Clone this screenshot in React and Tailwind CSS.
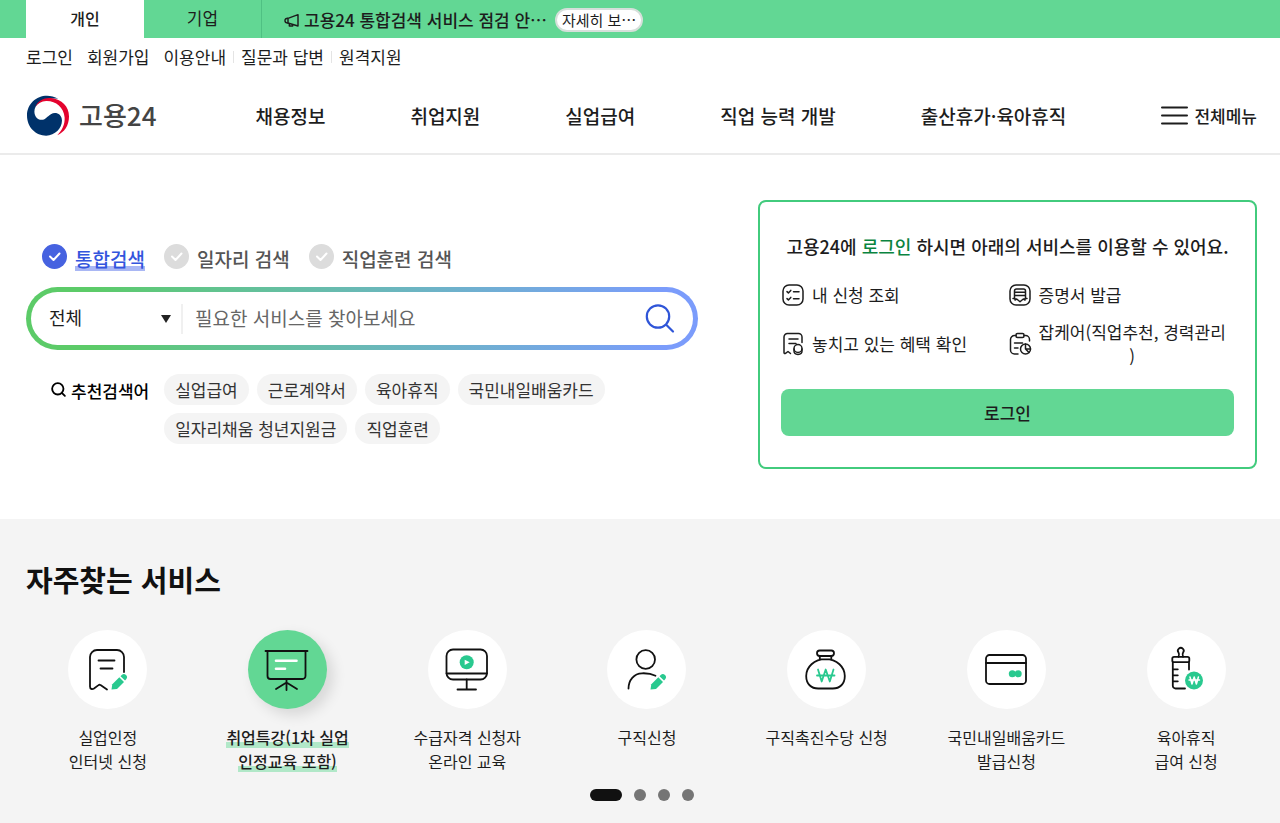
import { useState } from "react";
import { Search } from "lucide-react";

const MENUS = [
  "채용정보",
  "취업지원",
  "실업급여",
  "직업 능력 개발",
  "출산휴가·육아휴직",
];

const SEARCH_TYPES = ["통합검색", "일자리 검색", "직업훈련 검색"];

const KEYWORDS = [
  "실업급여",
  "근로계약서",
  "육아휴직",
  "국민내일배움카드",
  "일자리채움 청년지원금",
  "직업훈련",
];

const Logo = () => (
  <svg viewBox="11 11 125 122" className="h-[41px] w-[42px]" aria-hidden="true">
    <path
      fill="#00326a"
      d="M104 22C60 -2 11 26 11 72C11 108 38 132 68 132C95 130 116 110 115 86C114 68 97 60 82 68C70 75 66 85 54 85C42 85 33 74 33 60C34 40 54 18 104 22Z"
    />
    <path
      fill="#e4032e"
      d="M36 46C44 26 64 18 82 20C115 24 136 45 136 75C136 102 122 122 101 131C116 116 124 98 123 78C121 48 96 28 68 29C54 30 43 37 36 46Z"
    />
  </svg>
);

const MegaphoneIcon = () => (
  <svg
    viewBox="0 0 24 24"
    className="size-4 shrink-0"
    fill="none"
    stroke="currentColor"
    strokeWidth="2.2"
    strokeLinejoin="round"
    aria-hidden="true"
  >
    <path d="M6 9.500 21 4v17L6 16.500z" />
    <path d="M6 9.500C2.500 9.500 1.500 11 1.500 13s1 3.500 4.500 3.500M8 17v4h5v-2.500" />
  </svg>
);

/* 로그인 카드 아이콘 */
const CardIcon = ({ children }) => (
  <svg
    viewBox="0 0 24 24"
    className="size-6 shrink-0"
    fill="none"
    stroke="#1d1d1d"
    strokeWidth="1.5"
    strokeLinecap="round"
    strokeLinejoin="round"
    aria-hidden="true"
  >
    {children}
  </svg>
);

const CARD_ITEMS = [
  {
    key: "apply",
    label: "내 신청 조회",
    icon: (
      <CardIcon>
        <rect x="2" y="2" width="20" height="20" rx="6" />
        <path d="m6 8.600 1.400 1.300L9.800 7.400M6 15.600l1.400 1.300 2.400-2.500M12.500 8.800h5.500M12.500 15.800h5.500" />
      </CardIcon>
    ),
  },
  {
    key: "cert",
    label: "증명서 발급",
    icon: (
      <CardIcon>
        <rect x="2" y="2" width="20" height="20" rx="6" />
        <path d="M5 15.500h2V17l1.700-1 3.300 2.800 3.300-2.800 1.700 1v-1.500h2M6.500 15.500V8a2 2 0 0 1 2-2h7a2 2 0 0 1 2 2v7.500M6.500 9.300h11M6.500 12.500h11" />
      </CardIcon>
    ),
  },
  {
    key: "benefit",
    label: "놓치고 있는 혜택 확인",
    icon: (
      <CardIcon>
        <path d="M21 10.500V5a3.500 3.500 0 0 0-3.500-3.500H6.500A3.500 3.500 0 0 0 3 5v15.500c0 1 .8 1.300 1.500.8L7 19.500l2.500 2M8 7h9M8 11.500h7" />
        <circle cx="17" cy="16.500" r="4" />
        <path d="M13 17v2c0 4.500 8 4.500 8 0v-2" />
      </CardIcon>
    ),
  },
  {
    key: "jobcare",
    label: (
      <>
        잡케어(직업추천, 경력관리
        <br />)
      </>
    ),
    icon: (
      <CardIcon>
        <path d="M8 3.500H6.500A4 4 0 0 0 2.500 7.500V18a4 4 0 0 0 4 4H10M16 3.500h1.500a4 4 0 0 1 4 4V9M6.500 11h8M6.500 16H10" />
        <rect x="8" y="1.500" width="8" height="4" rx="1.500" />
        <circle cx="17.500" cy="17" r="5" />
        <path d="M17.500 12v5l3.500 3.500M17.500 17h5" />
      </CardIcon>
    ),
  },
];

/* 자주찾는 서비스 아이콘 */
const ServiceIcon = ({ children }) => (
  <svg
    viewBox="0 0 79 79"
    className="size-[79px]"
    fill="none"
    stroke="#111"
    strokeWidth="1.8"
    strokeLinecap="round"
    strokeLinejoin="round"
    aria-hidden="true"
  >
    {children}
  </svg>
);

const Pencil = () => (
  <g fill="#29c98f" stroke="none">
    <path d="M43.500 59.500 44.300 54.300 51.300 47.300 56 52 49 59Z" />
    <path d="m52.500 46.300 1.200-1.200a2.900 2.900 0 0 1 4.300 4.300L57 50.600Z" />
  </g>
);

const SERVICES = [
  {
    lines: ["실업인정", "인터넷 신청"],
    icon: (
      <ServiceIcon>
        <path d="M56 42V27a7 7 0 0 0-7-7H29a7 7 0 0 0-7 7v29.500c0 2.500 2 3.300 4 2l4.500-3.400q1-.8 2 0l6.500 4.400M30.500 30.500h16M32.500 38.500h12" />
        <Pencil />
      </ServiceIcon>
    ),
  },
  {
    lines: ["취업특강(1차 실업", "인정교육 포함)"],
    active: true,
    icon: (
      <ServiceIcon>
        <path d="M17.500 21h42M19.500 21v25a3 3 0 0 0 3 3h32a3 3 0 0 0 3-3V21M38.500 49v11M38.500 52.500 28 59M38.500 52.500 49 59" />
        <path stroke="#fff" strokeWidth="2.600" d="M28 30.700h20.500M28 38.700h9" />
      </ServiceIcon>
    ),
  },
  {
    lines: ["수급자격 신청자", "온라인 교육"],
    icon: (
      <ServiceIcon>
        <rect x="18.500" y="19.500" width="40.500" height="30" rx="6.500" />
        <path d="M18.500 43.500H59M38.700 49.500v10M29.500 59.500h18.500" />
        <circle cx="38.700" cy="32.300" r="7" fill="#29c98f" stroke="none" />
        <path d="m36.700 29.700 5 2.600-5 2.600z" fill="#fff" stroke="none" />
      </ServiceIcon>
    ),
  },
  {
    lines: ["구직신청"],
    icon: (
      <ServiceIcon>
        <circle cx="38.700" cy="29.500" r="9.300" />
        <path d="M21.500 58.500C21.500 50 27 43.500 35 43.300c5-.2 9 .2 13.500 2.400" />
        <Pencil />
      </ServiceIcon>
    ),
  },
  {
    lines: ["구직촉진수당 신청"],
    icon: (
      <ServiceIcon>
        <rect x="30" y="20.500" width="17" height="5.500" rx="2.700" />
        <path d="M32.800 26v3.500M44.300 26v3.500M38.500 29.200C27 29.200 19.200 37 19.200 46c0 8 5 12.500 12 12.500h14.600c7 0 12-4.500 12-12.500 0-9-7.800-16.800-19.300-16.800Z" />
        <path stroke="#29c98f" d="m31 39.500 3.700 12 4-12 4.100 12 3.700-12M30 45.500h17.500" />
      </ServiceIcon>
    ),
  },
  {
    lines: ["국민내일배움카드", "발급신청"],
    icon: (
      <ServiceIcon>
        <rect x="19" y="25" width="40" height="29" rx="3.500" />
        <path d="M19 33h40" />
        <g fill="#29c98f" stroke="none">
          <circle cx="45.300" cy="43.800" r="3.500" />
          <circle cx="51.200" cy="43.800" r="3.500" />
        </g>
      </ServiceIcon>
    ),
  },
  {
    lines: ["육아휴직", "급여 신청"],
    icon: (
      <ServiceIcon>
        <path d="M31.500 26.800c1-2 .8-3 0-4.300a2.900 2.900 0 1 1 4.600 0c-.8 1.300-1 2.300 0 4.300" />
        <rect x="25.300" y="26.800" width="17" height="5.400" rx="1.800" />
        <path d="M25.800 32.200v23.500a2.800 2.800 0 0 0 2.800 2.800h9.400M42 32.200v7.300M25.800 39.300h5M25.800 45.300h5M25.800 51.300h5" />
        <circle cx="47" cy="50.500" r="9" fill="#29c98f" stroke="none" />
        <path
          stroke="#fff"
          strokeWidth="1.500"
          d="m43 47 2 7 2.200-7 2.200 7 2-7M42 50h10.500"
        />
      </ServiceIcon>
    ),
  },
];

const TopBar = () => {
  return (
    <div className="flex h-[38px] items-stretch bg-[#62d794] pl-[26px]">
      <a
        href="#personal"
        className="flex w-[118px] items-center justify-center bg-white pb-[2px] text-[16px] font-medium"
      >
        개인
      </a>
      <a
        href="#company"
        className="flex w-[118px] items-center justify-center border-r border-[#4fc083] pb-[2px] text-[17px]"
      >
        기업
      </a>
      <div className="flex items-center pt-[2px] pl-[22px]">
        <MegaphoneIcon />
        <span className="ml-1 text-[17px] font-medium">
          고용24 통합검색 서비스 점검 안⋯
        </span>
        <button className="ml-2 flex h-6 w-[88px] items-center justify-center rounded-full border-2 border-[#d6dfda] bg-white text-[15px] leading-5 whitespace-nowrap">
          자세히 보⋯
        </button>
      </div>
    </div>
  );
};

const Header = () => {
  return (
    <header className="border-b-2 border-[#ebebeb]">
      <TopBar />

      <div className="flex h-[39px] items-center pb-[2px] pl-[26px] text-[17px]">
        <a href="#login">로그인</a>
        <a href="#join" className="ml-[14px]">
          회원가입
        </a>
        <a href="#guide" className="ml-[14px]">
          이용안내
        </a>
        <span className="mx-[7px] h-3 w-px bg-[#e4e4e4]" />
        <a href="#faq">질문과 답변</a>
        <span className="mx-[7px] h-3 w-px bg-[#e4e4e4]" />
        <a href="#remote">원격지원</a>
      </div>

      <div className="flex h-[76px] items-center pr-[23px] pl-[27px]">
        <a href="#home" className="flex items-center gap-[10px]">
          <Logo />
          <span className="text-[26px] leading-9 font-medium text-[#444]">
            고용24
          </span>
        </a>
        <nav className="ml-[99px] flex gap-[85px] pt-[2px] text-[19px] font-medium">
          {MENUS.map((menu) => (
            <a key={menu} href="#menu">
              {menu}
            </a>
          ))}
        </nav>
        <button className="ml-auto flex items-center gap-[6px] pt-[2px] text-[17px] font-medium">
          <svg
            viewBox="0 0 27 20"
            className="h-5 w-[27px]"
            stroke="#1d1d1d"
            strokeWidth="2"
            strokeLinecap="round"
            aria-hidden="true"
          >
            <path d="M1 1.500h25M1 9.500h25M1 17.500h25" />
          </svg>
          전체메뉴
        </button>
      </div>
    </header>
  );
};

const SearchArea = () => {
  const [type, setType] = useState(SEARCH_TYPES[0]);

  return (
    <div className="min-w-0 flex-1 pt-[43px]">
      {/* 검색 구분 */}
      <div className="flex gap-[19px] pl-4">
        {SEARCH_TYPES.map((item) => (
          <label
            key={item}
            className="flex items-center gap-2 text-[19px] leading-8 font-medium"
          >
            <span className="mb-[6px] grid size-[25px]">
              <input
                type="radio"
                name="searchType"
                checked={type === item}
                onChange={() => setType(item)}
                className="col-start-1 row-start-1 size-[25px] appearance-none rounded-full bg-[#dcdcdc] checked:bg-[#4662e0]"
              />
              <svg
                viewBox="0 0 25 25"
                className="pointer-events-none col-start-1 row-start-1"
                fill="none"
                stroke="#fff"
                strokeWidth="2"
                strokeLinecap="round"
                strokeLinejoin="round"
                aria-hidden="true"
              >
                <path d="m8 12.500 3.500 3.500 6-6.500" />
              </svg>
            </span>
            <span
              className={
                type === item
                  ? "bg-[linear-gradient(#a9b7f4,#a9b7f4)] bg-[length:100%_5px] bg-[position:0_23px] bg-no-repeat text-[#3355dd]"
                  : "text-[#555]"
              }
            >
              {item}
            </span>
          </label>
        ))}
      </div>

      {/* 검색창 */}
      <form
        onSubmit={(e) => e.preventDefault()}
        className="mt-3 rounded-full bg-linear-to-r from-[#5ccb68] from-10% to-[#7b9cfb] to-95% p-[5px]"
      >
        <div className="flex h-[53px] items-center rounded-full bg-white pr-[18px] pl-[18px]">
          <div className="grid w-[134px] items-center border-r-2 border-[#f0f0f0]">
            <select
              aria-label="검색 범위"
              className="col-start-1 row-start-1 h-[30px] appearance-none bg-transparent pb-[2px] text-[18px]"
            >
              <option>전체</option>
            </select>
            <svg
              viewBox="0 0 10 8"
              className="pointer-events-none col-start-1 row-start-1 mr-[10px] h-2 w-[10px] justify-self-end"
              aria-hidden="true"
            >
              <path d="M0 0h10L5 8z" fill="#222" />
            </svg>
          </div>
          <input
            type="text"
            aria-label="검색어"
            placeholder="필요한 서비스를 찾아보세요"
            className="ml-3 min-w-0 flex-1 text-[19px] outline-none placeholder:text-[#666]"
          />
          <button aria-label="검색">
            <svg
              viewBox="0 0 30 30"
              className="size-[30px]"
              fill="none"
              stroke="#2f55d8"
              strokeWidth="2.200"
              strokeLinecap="round"
              aria-hidden="true"
            >
              <circle cx="13" cy="12.500" r="11.200" />
              <path d="m21.500 21 6.500 6.500" />
            </svg>
          </button>
        </div>
      </form>

      {/* 추천검색어 */}
      <div className="mt-6 flex items-start pl-6">
        <div className="flex h-[34px] shrink-0 items-center gap-1 text-[17px] font-medium text-black">
          <Search className="mb-1 size-[17px]" strokeWidth={2.6} />
          추천검색어
        </div>
        <ul className="ml-[15px] flex flex-wrap gap-2">
          {KEYWORDS.map((keyword) => (
            <li key={keyword}>
              <a
                href="#keyword"
                className="block rounded-full bg-[#f4f4f4] px-[11px] text-[17px] leading-[31px] text-[#333]"
              >
                {keyword}
              </a>
            </li>
          ))}
        </ul>
      </div>
    </div>
  );
};

const LoginCard = () => {
  return (
    <div className="w-[499px] shrink-0 rounded-lg border-2 border-[#42cb7d] px-[21px] pt-[30px] pb-[31px]">
      <p className="text-center text-[18px] leading-7 font-medium whitespace-nowrap">
        고용24에 <strong className="font-medium text-[#0a8440]">로그인</strong>{" "}
        하시면 아래의 서비스를 이용할 수 있어요.
      </p>
      <ul className="mt-[10px] grid grid-cols-2 text-[17px]">
        {CARD_ITEMS.map((item) => (
          <li key={item.key}>
            <a href="#service" className="flex h-[49px] items-center gap-[7px]">
              {item.icon}
              <span className="text-center leading-6 whitespace-nowrap">
                {item.label}
              </span>
            </a>
          </li>
        ))}
      </ul>
      <button className="mt-[21px] h-[47px] w-full rounded-lg bg-[#62d794] text-[17px] font-medium">
        로그인
      </button>
    </div>
  );
};

const ServiceSection = () => {
  const [page, setPage] = useState(0);

  return (
    <section className="flex-1 bg-[#f4f4f4] pt-10 pb-[22px]">
      <h2 className="pl-[26px] text-[29px] leading-10 font-bold text-[#111]">
        자주찾는 서비스
      </h2>
      <ul className="mt-[31px] grid grid-cols-7 pr-1 pl-[18px]">
        {SERVICES.map((service) => (
          <li key={service.lines[0]}>
            <a href="#service" className="flex flex-col items-center">
              <span
                className={`rounded-full ${
                  service.active
                    ? "bg-[#62d794] shadow-[6px_6px_14px_rgba(0,0,0,0.12)]"
                    : "bg-white"
                }`}
              >
                {service.icon}
              </span>
              <span className="mt-4 flex h-12 flex-col items-center text-[16px] leading-6">
                {service.lines.map((line) => (
                  <span
                    key={line}
                    className={
                      service.active
                        ? "bg-[linear-gradient(#b1e8c8,#b1e8c8)] bg-[length:100%_6px] bg-[position:0_17px] bg-no-repeat font-medium"
                        : ""
                    }
                  >
                    {line}
                  </span>
                ))}
              </span>
            </a>
          </li>
        ))}
      </ul>
      <div className="mt-4 flex justify-center gap-3 pl-[3px]">
        {[0, 1, 2, 3].map((n) => (
          <button
            key={n}
            aria-label={`${n + 1}번째 목록`}
            onClick={() => setPage(n)}
            className={`h-3 rounded-full ${
              page === n ? "w-8 bg-[#111]" : "w-3 bg-[#757575]"
            }`}
          />
        ))}
      </div>
    </section>
  );
};

const App = () => {
  return (
    <div
      lang="ko"
      className="flex min-h-screen flex-col bg-white font-['Noto_Sans_CJK_KR',sans-serif] text-[#1d1d1d]"
    >
      <Header />
      <main className="flex flex-1 flex-col">
        <section className="flex gap-[60px] pt-[45px] pr-[23px] pb-[50px] pl-[26px]">
          <SearchArea />
          <LoginCard />
        </section>
        <ServiceSection />
      </main>
    </div>
  );
};

export default App;
